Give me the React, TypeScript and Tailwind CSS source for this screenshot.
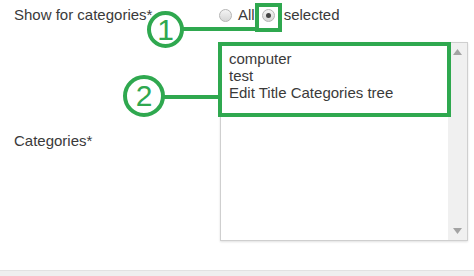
const Radio = ({ checked }: { checked?: boolean }) => (
  <span className="inline-flex h-[13px] w-[13px] items-center justify-center rounded-full border border-[#b5b5b5] bg-gradient-to-b from-[#f4f4f4] to-[#d6d6d6]">
    {checked && <span className="h-[5px] w-[5px] rounded-full bg-[#444]" />}
  </span>
);

const Callout = ({ n, className }: { n: string; className: string }) => (
  <div
    className={`absolute flex items-center justify-center rounded-full border-[4px] border-[#2fa84f] bg-white text-[30px] leading-none text-[#2fa84f] ${className}`}
    style={{ fontFamily: '"Liberation Sans", Arial, sans-serif' }}
  >
    {n}
  </div>
);

export default function App() {
  return (
    <div
      className="relative h-[276px] w-[474px] overflow-hidden bg-white text-[15px] text-[#3a3a3a]"
      style={{ fontFamily: '"Liberation Sans", Arial, sans-serif' }}
    >
      <div className="flex h-[30px] items-center">
        <div className="w-[219px] pl-[14px]">Show for categories*</div>
        <div className="flex items-center">
          <Radio />
          <span className="ml-[6px] mr-[7px]">All</span>
          <Radio checked />
          <span className="ml-[9px]">selected</span>
        </div>
      </div>

      <div className="mt-[12px] flex items-center">
        <div className="w-[220px] pl-[14px]">Categories*</div>
        <div className="flex h-[199px] w-[248px] border border-[#cfcfcf] shadow-[0_1px_2px_rgba(0,0,0,0.12)]">
          <div className="flex-1 pl-[8px] pt-[7px] leading-[17px]">
            <div>computer</div>
            <div>test</div>
            <div>Edit Title Categories tree</div>
          </div>
          <div className="flex w-[19px] flex-col items-center justify-between bg-[#f0f0f0] py-[6px]">
            <svg width="9" height="6" viewBox="0 0 9 6">
              <path d="M0 6 L4.5 0 L9 6 Z" fill="#a3a3a3" />
            </svg>
            <svg width="9" height="6" viewBox="0 0 9 6">
              <path d="M0 0 L4.5 6 L9 0 Z" fill="#a3a3a3" />
            </svg>
          </div>
        </div>
      </div>

      <div className="absolute bottom-0 left-0 h-[6px] w-full border-t border-[#e2e2e2] bg-[#efefef]" />

      {/* annotation 1 */}
      <div className="absolute left-[255px] top-[3px] h-[29px] w-[27px] border-[4px] border-[#2fa84f]" />
      <div className="absolute left-[180px] top-[27px] h-[4px] w-[77px] bg-[#2fa84f]" />
      <Callout n="1" className="left-[147px] top-[11px] h-[37px] w-[37px]" />

      {/* annotation 2 */}
      <div className="absolute left-[218px] top-[42px] h-[75px] w-[233px] border-[4px] border-[#2fa84f]" />
      <div className="absolute left-[160px] top-[95px] h-[4px] w-[60px] bg-[#2fa84f]" />
      <Callout n="2" className="left-[123px] top-[75px] h-[42px] w-[42px]" />
    </div>
  );
}
